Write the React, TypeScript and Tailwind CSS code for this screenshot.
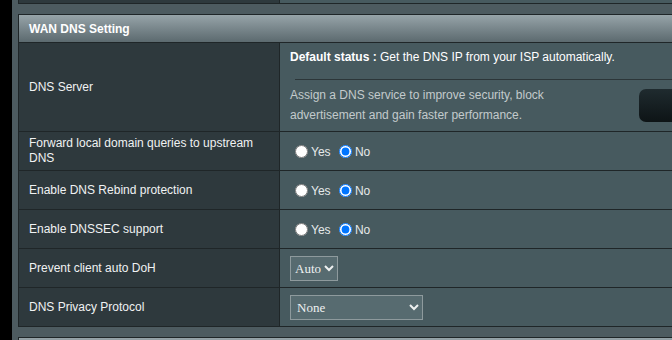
import React from "react";

const Radio = ({ checked, name }: { checked: boolean; name: string }) => (
  <input type="radio" name={name} defaultChecked={checked} className="m-[3px_3px_0_5px] h-[13px] w-[13px] align-[-2px]" />
);

const YesNo = ({ name }: { name: string }) => (
  <div className="text-[12px] text-[#e6e9ea]">
    <Radio name={name} checked={false} />
    <span>Yes</span> <Radio name={name} checked={true} />
    <span>No</span>
  </div>
);

const Row = ({ label, children, h = "h-[39px]" }: { label: React.ReactNode; children: React.ReactNode; h?: string }) => (
  <div className={`flex shrink-0 ${h} border-b border-[#1f2628]`}>
    <div className="flex w-[261px] shrink-0 items-center border-r border-[#1f2628] bg-[#2e393d] pl-[10px] text-[12px] leading-[15px] text-[#f0f2f3]">
      {label}
    </div>
    <div className="flex flex-1 items-center bg-[#475a5f] pl-[10px]">{children}</div>
  </div>
);

export default function App() {
  return (
    <div
      className="flex h-[340px] w-[672px] overflow-hidden bg-black"
      style={{ fontFamily: '"Liberation Sans", Arial, sans-serif' }}
    >
      <div className="w-[12px] shrink-0 bg-black" />
      <div className="flex min-w-0 flex-1 flex-col bg-[#4d5b60] pl-[6px]">
        {/* previous table bottom */}
        <div className="flex h-[4px] w-[700px] shrink-0 border-b border-l border-[#1f2628]">
          <div className="w-[261px] border-r border-[#1f2628] bg-[#2e393d]" />
          <div className="flex-1 bg-[#475a5f]" />
        </div>
        <div className="h-[10px] shrink-0" />
        <div className="flex w-[700px] shrink-0 flex-col border-l border-t border-[#1f2628]">
          <div className="flex h-[28px] shrink-0 items-center border-b border-[#1f2628] bg-gradient-to-b from-[#97a4a9] to-[#5c6a6f] pl-[10px] text-[12px] font-bold text-white">
            WAN DNS Setting
          </div>
          <Row label="DNS Server" h="h-[89px]">
            <div className="flex h-full w-full flex-col pr-0">
              <div className="mt-[5px] text-[12px] text-white">
                <span className="font-bold">Default status :</span> Get the DNS IP from your ISP automatically.
              </div>
              <div className="ml-[5px] mt-[13px] h-px bg-[#2c3639]" />
              <div className="mt-[5px] flex items-start">
                <div className="w-[320px] text-[12px] leading-[20px] text-[#c3cacc]">
                  Assign a DNS service to improve security, block advertisement and gain faster performance.
                </div>
                <div className="ml-[29px] mt-[4px] h-[33px] w-[60px] rounded-[7px] bg-gradient-to-b from-[#1f2b2f] to-[#0e1416]" />
              </div>
            </div>
          </Row>
          <Row label={<span>Forward local domain queries to upstream<br />DNS</span>}>
            <YesNo name="fwd" />
          </Row>
          <Row label="Enable DNS Rebind protection">
            <YesNo name="rebind" />
          </Row>
          <Row label="Enable DNSSEC support">
            <YesNo name="dnssec" />
          </Row>
          <Row label="Prevent client auto DoH">
            <select
              className="h-[25px] border border-[#8e9a9d] bg-[#576b70] text-[13px] text-[#eef0f0] outline-none"
              style={{ fontFamily: '"Liberation Serif", serif' }}
              defaultValue="Auto"
            >
              <option>Auto</option>
            </select>
          </Row>
          <Row label="DNS Privacy Protocol">
            <select
              className="h-[25px] w-[133px] border border-[#8e9a9d] bg-[#576b70] pl-[2px] text-[13px] text-[#eef0f0] outline-none"
              style={{ fontFamily: '"Liberation Serif", serif' }}
              defaultValue="None"
            >
              <option>None</option>
            </select>
          </Row>
        </div>
        <div className="h-[10px] shrink-0" />
        <div className="h-[20px] w-[700px] shrink-0 border-l border-t border-[#1f2628] bg-gradient-to-b from-[#97a4a9] to-[#5c6a6f]" />
      </div>
    </div>
  );
}
